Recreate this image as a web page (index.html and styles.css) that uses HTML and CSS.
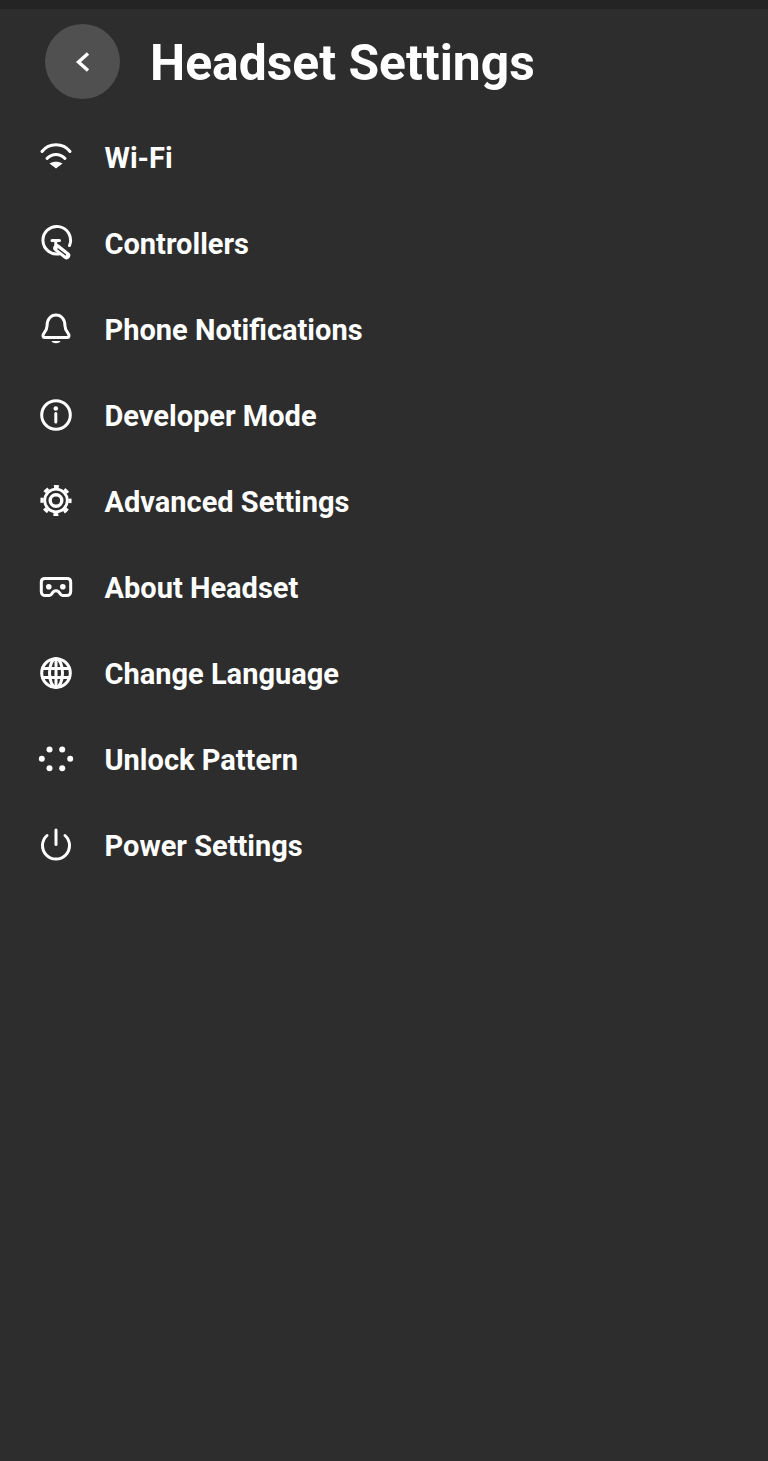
FILE: index.html
```html
<!DOCTYPE html>
<html lang="en">
<head>
    <meta charset="UTF-8">
    <meta name="viewport" content="width=device-width, initial-scale=1.0">
    <title>Headset Settings</title>
    <link rel="stylesheet" href="styles.css">
</head>
<body>

    <div class="status-bar"></div>

    <header class="top">
        <button class="back" type="button" aria-label="Back">
            <svg width="18" height="24" viewBox="0 0 18 24"><path d="M14 3.500 L4.500 12 L14 20.500"/></svg>
        </button>
        <h1>Headset Settings</h1>
    </header>

    <ul class="menu">
        <li>
            <svg class="icon" viewBox="0 0 34 34"><path d="M3 12.500 C10 3.500 24 3.500 31 12.500"/><path d="M8 19.500 C13 14 21 14 26 19.500"/><path class="fill" stroke="none" d="M10.500 24.500 C14 22 20 22 23.500 24.500 L17 29.500 Z"/></svg>
            <span>Wi-Fi</span>
        </li>
        <li>
            <svg class="icon" viewBox="0 0 34 34"><path d="M21.500 28.500 A13.800 13.800 0 1 1 30.500 20.500"/><path d="M13 15.500 H20.500 M16.800 15.500 V22"/><path d="M18 23 L27.500 30.500" class="grip"/><path d="M19 24 L26.500 29.800" class="grip-hole"/></svg>
            <span>Controllers</span>
        </li>
        <li>
            <svg class="icon" viewBox="0 0 34 34"><path d="M8 15 C8 8 12 4 17 4 C22 4 26 8 26 15 C26 20 30 22 30 24.500 C30 25.800 29 26.500 28 26.500 H6 C5 26.500 4 25.800 4 24.500 C4 22 8 20 8 15 Z"/><path class="fill" stroke="none" d="M12.500 30 H21.500 C20.500 33 13.500 33 12.500 30 Z"/></svg>
            <span>Phone Notifications</span>
        </li>
        <li>
            <svg class="icon" viewBox="0 0 34 34"><circle cx="17" cy="18" r="14.300"/><circle class="fill" stroke="none" cx="16.800" cy="11.500" r="2.300"/><path d="M16.800 16.500 V25"/></svg>
            <span>Developer Mode</span>
        </li>
        <li>
            <svg class="icon" viewBox="0 0 34 34"><circle class="gear-body" cx="17" cy="17.500" r="11.300"/><circle class="teeth" cx="17" cy="17.500" r="14"/><circle class="gear-hub" cx="17" cy="17.500" r="5.800"/></svg>
            <span>Advanced Settings</span>
        </li>
        <li>
            <svg class="icon" viewBox="0 0 34 34"><path d="M6 9.500 H28 C30.500 9.500 31.700 11 31.700 13 V22.500 C31.700 25 30 26.500 28 26.500 H23.500 C21.500 26.500 21 24 19.500 22.700 C18 21.500 16 21.500 14.500 22.700 C13 24 12.500 26.500 10.500 26.500 H6 C4 26.500 2.300 25 2.300 22.500 V13 C2.300 11 3.500 9.500 6 9.500 Z"/><circle class="fill" stroke="none" cx="9.800" cy="17.700" r="2.800"/><circle class="fill" stroke="none" cx="23.800" cy="17.700" r="2.800"/></svg>
            <span>About Headset</span>
        </li>
        <li>
            <svg class="icon" viewBox="0 0 34 34"><circle cx="17" cy="18" r="14.300"/><ellipse cx="17" cy="18" rx="6.500" ry="14.300"/><path d="M17 3.700 V32.300 M3.500 13.500 H30.500 M3.500 22.500 H30.500"/></svg>
            <span>Change Language</span>
        </li>
        <li>
            <svg class="icon dots" viewBox="0 0 34 34"><circle cx="10.500" cy="8.500" r="3"/><circle cx="23.200" cy="8.500" r="3"/><circle cx="2.800" cy="17.800" r="3"/><circle cx="31.200" cy="17.800" r="3"/><circle cx="10.500" cy="27.200" r="3"/><circle cx="23.200" cy="27.200" r="3"/></svg>
            <span>Unlock Pattern</span>
        </li>
        <li>
            <svg class="icon" viewBox="0 0 34 34"><path d="M17 3 V17.500"/><path d="M8 8.500 A13.500 13.500 0 1 0 26 8.500"/></svg>
            <span>Power Settings</span>
        </li>
    </ul>

</body>
</html>
```

FILE: styles.css
```css
html, body {
    height: 100%;
}
body {
    margin: 0;
    background-color: #2d2d2d;
    color: #fff;
    font-family: Roboto, "Liberation Sans", sans-serif;
    overflow: hidden;
}
.status-bar {
    height: 9px;
    background-color: #242424;
}
.top {
    display: flex;
    align-items: center;
    gap: 30px;
    padding: 15px 0 0 45px;
    height: 90px;
    box-sizing: border-box;
}
.top h1 {
    margin: 0;
    padding-top: 2px;
    font-size: 49.8px;
    font-weight: 700;
    line-height: 78px;
}
.back {
    display: flex;
    align-items: center;
    justify-content: center;
    width: 75px;
    height: 75px;
    padding: 0;
    border: none;
    border-radius: 50%;
    background-color: #505050;
}
.back svg {
    fill: none;
    stroke: #fff;
    stroke-width: 3.4;
}
.menu {
    list-style: none;
    margin: 0;
    padding: 15px 0 0 39px;
}
.menu li {
    display: flex;
    align-items: center;
    gap: 31.5px;
    height: 86.1px;
    font-size: 29px;
    font-weight: 700;
}
.menu span {
    padding-top: 1px;
}
.icon {
    width: 34px;
    height: 34px;
    flex: none;
    margin-top: -3px;
    overflow: visible;
    fill: none;
    stroke: #fff;
    stroke-width: 3;
    stroke-linecap: round;
    stroke-linejoin: round;
}
.icon .fill {
    fill: #fff;
}
.icon .grip {
    stroke-width: 7.5;
}
.icon .grip-hole {
    stroke: #2d2d2d;
    stroke-width: 1.4;
}
.icon .gear-body {
    stroke-width: 2.8;
}
.icon .gear-hub {
    stroke-width: 3.4;
}
.icon .teeth {
    stroke-width: 3.2;
    stroke-linecap: butt;
    stroke-dasharray: 5 5.996;
    stroke-dashoffset: 2.5;
}
.dots {
    fill: #fff;
    stroke: none;
}
```
